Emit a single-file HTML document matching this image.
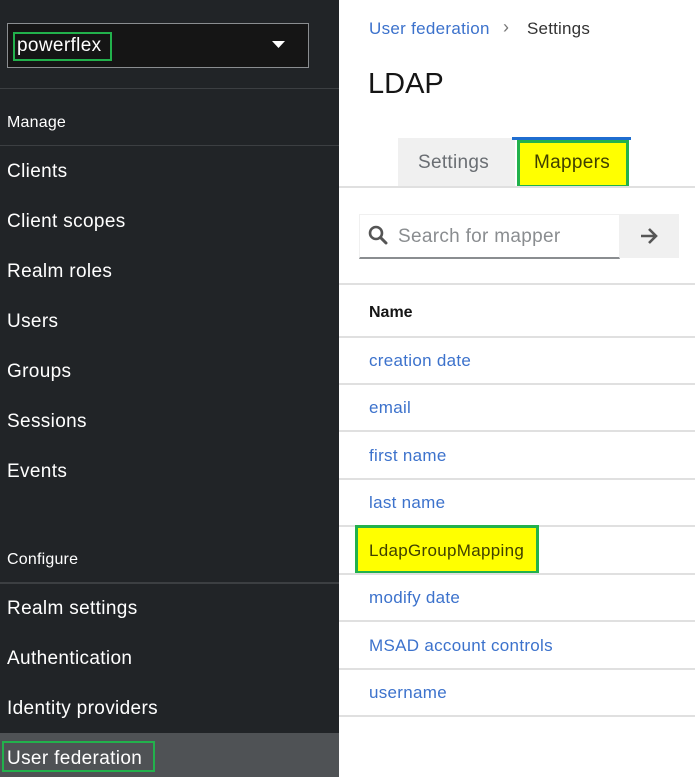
<!DOCTYPE html>
<html><head><meta charset="utf-8"><style>
*{margin:0;padding:0;box-sizing:border-box}
body{width:695px;height:777px;overflow:hidden;background:#fff;font-family:"Liberation Sans",sans-serif;position:relative}
.a{position:absolute;white-space:nowrap}
#side{position:absolute;left:0;top:0;width:339px;height:777px;background:#212427}
.nav{position:absolute;left:7px;color:#fff;font-size:19px;letter-spacing:0.35px;line-height:20px}
.hl{position:absolute;left:0;width:339px;height:1px;background:#3c3f42}
.row{position:absolute;left:339px;width:356px;height:2px;background:#e0e0e0}
.lk{position:absolute;left:369px;color:#3c72cc;font-size:17px;letter-spacing:0.3px;line-height:20px}
</style></head><body>
<div id="side">
 <div class="a" style="left:7px;top:23px;width:302px;height:45px;background:#151515;border:1px solid #8a8d90"></div>
 <div class="a" style="left:13px;top:32px;width:99px;height:29px;border:2px solid #22b14c"></div>
 <div class="nav" style="left:17px;top:36px">powerflex</div>
 <svg class="a" style="left:272px;top:41px" width="13" height="8"><path d="M0 0H13L6.5 7Z" fill="#fff"/></svg>
 <div class="hl" style="top:88px"></div>
 <div class="nav" style="top:113px;font-size:16px;letter-spacing:0.2px">Manage</div>
 <div class="hl" style="top:145px"></div>
 <div class="nav" style="top:162px">Clients</div>
 <div class="nav" style="top:212px">Client scopes</div>
 <div class="nav" style="top:262px">Realm roles</div>
 <div class="nav" style="top:312px">Users</div>
 <div class="nav" style="top:362px">Groups</div>
 <div class="nav" style="top:412px">Sessions</div>
 <div class="nav" style="top:462px">Events</div>
 <div class="nav" style="top:550px;font-size:16px;letter-spacing:0.2px">Configure</div>
 <div class="hl" style="top:582px;height:2px"></div>
 <div class="nav" style="top:599px">Realm settings</div>
 <div class="nav" style="top:649px">Authentication</div>
 <div class="nav" style="top:699px">Identity providers</div>
 <div class="a" style="left:0;top:733px;width:339px;height:44px;background:#4f5255"></div>
 <div class="a" style="left:2px;top:741px;width:153px;height:31px;border:2px solid #22b14c"></div>
 <div class="nav" style="top:749px">User federation</div>
</div>
<div class="a" style="left:369px;top:19px;font-size:17px;letter-spacing:0.3px;color:#3c72cc">User federation</div>
<div class="a" style="left:503px;top:17px;font-size:18px;color:#777">&#8250;</div>
<div class="a" style="left:527px;top:19px;font-size:17px;letter-spacing:0.2px;color:#333">Settings</div>
<div class="a" style="left:368px;top:68px;font-size:29px;color:#151515">LDAP</div>
<div class="a" style="left:398px;top:138px;width:117px;height:49px;background:#f0f0f0"></div>
<div class="a" style="left:418px;top:152px;font-size:19px;letter-spacing:0.3px;color:#6a6e73">Settings</div>
<div class="a" style="left:512px;top:137px;width:119px;height:3px;background:#1f6dd0"></div>
<div class="a" style="left:517px;top:140px;width:112px;height:48px;background:#ffff00;border:3px solid #22b14c"></div>
<div class="a" style="left:534px;top:152px;font-size:19px;letter-spacing:0.3px;color:#404000">Mappers</div>
<div class="row" style="top:186px"></div>
<div class="a" style="left:359px;top:214px;width:261px;height:45px;border:1px solid #f0f0f0;border-bottom:2px solid #8a8d90"></div>
<svg class="a" style="left:368px;top:225px" width="20" height="20"><circle cx="8" cy="8" r="6" stroke="#555" stroke-width="2.6" fill="none"/><path d="M12.5 12.5L18 18" stroke="#555" stroke-width="3" stroke-linecap="round"/></svg>
<div class="a" style="left:398px;top:226px;font-size:19px;letter-spacing:0.3px;color:#8a8d90">Search for mapper</div>
<div class="a" style="left:620px;top:214px;width:59px;height:44px;background:#f0f0f0"></div>
<svg class="a" style="left:640px;top:227px" width="19" height="18"><path d="M1 9H16M9 2L16 9L9 16" stroke="#555" stroke-width="2.6" fill="none"/></svg>
<div class="row" style="top:283px"></div>
<div class="a" style="left:369px;top:304px;font-size:16px;font-weight:bold;color:#151515">Name</div>
<div class="row" style="top:336px"></div>
<div class="lk" style="top:351px">creation date</div>
<div class="row" style="top:383px"></div>
<div class="lk" style="top:398px">email</div>
<div class="row" style="top:430px"></div>
<div class="lk" style="top:446px">first name</div>
<div class="row" style="top:478px"></div>
<div class="lk" style="top:493px">last name</div>
<div class="row" style="top:525px"></div>
<div class="a" style="left:355px;top:525px;width:184px;height:49px;background:#ffff00;border:3px solid #22b14c"></div>
<div class="lk" style="top:541px;color:#404000">LdapGroupMapping</div>
<div class="row" style="top:573px"></div>
<div class="lk" style="top:588px">modify date</div>
<div class="row" style="top:620px"></div>
<div class="lk" style="top:636px">MSAD account controls</div>
<div class="row" style="top:668px"></div>
<div class="lk" style="top:683px">username</div>
<div class="row" style="top:715px"></div>
</body></html>
